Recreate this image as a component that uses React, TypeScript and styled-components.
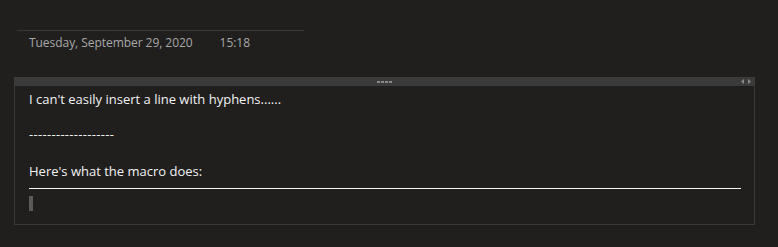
import React from 'react';
import styled, { createGlobalStyle } from 'styled-components';

const GlobalStyle = createGlobalStyle`
  html, body {
    margin: 0;
    padding: 0;
    background: #201f1e;
  }
  body {
    font-family: 'Open Sans', 'Noto Sans', sans-serif;
  }
`;

const Page = styled.div`
  width: 778px;
  height: 247px;
  background: #201f1e;
  padding-top: 30px;
  box-sizing: border-box;
`;

const TitleArea = styled.div`
  margin-left: 17px;
  width: 287px;
  border-top: 1px solid #363636;
`;

const DateRow = styled.div`
  display: flex;
  gap: 27px;
  padding: 4px 0 0 12px;
  font-size: 12px;
  letter-spacing: -0.05px;
  line-height: 16px;
  color: #a8a8a8;
`;

const Box = styled.div`
  margin: 26px 0 0 14px;
  width: 741px;
  height: 148px;
  box-sizing: border-box;
  border: 1px solid #3a3a3a;
  border-top: none;
  display: flex;
  flex-direction: column;
`;

const Handle = styled.div`
  height: 9px;
  background: #3b3b3b;
  display: flex;
  align-items: center;
`;

const Dots = styled.div`
  display: flex;
  gap: 1px;
  margin-left: 362px;
`;

const Dot = styled.span`
  width: 3px;
  height: 2px;
  background: #8a8a8a;
`;

const Arrows = styled.div`
  display: flex;
  gap: 4px;
  margin-left: auto;
  margin-right: 3px;
`;

const Content = styled.div`
  padding: 4px 0 0 14px;
  font-size: 13px;
  line-height: 18px;
  color: #f2f2f2;
`;

const Line = styled.div<{ $gap?: number; $spread?: number }>`
  margin-top: ${(p) => p.$gap ?? 0}px;
  letter-spacing: ${(p) => p.$spread ?? 0}px;
  white-space: pre;
`;

const Rule = styled.div`
  margin-top: 8px;
  width: 712px;
  height: 1px;
  background: #f4f4f4;
`;

const Caret = styled.div`
  margin-top: 7px;
  width: 4px;
  height: 15px;
  background: #5a5a5a;
`;

const Tri = ({ dir }: { dir: 'l' | 'r' }) => (
  <svg width="3" height="5" viewBox="0 0 3 5">
    <path d={dir === 'l' ? 'M3 0 L0 2.5 L3 5 Z' : 'M0 0 L3 2.5 L0 5 Z'} fill="#8a8a8a" />
  </svg>
);

export default function App() {
  return (
    <Page>
      <GlobalStyle />
      <TitleArea>
        <DateRow>
          <span>Tuesday, September 29, 2020</span>
          <span>15:18</span>
        </DateRow>
      </TitleArea>
      <Box>
        <Handle>
          <Dots>
            <Dot />
            <Dot />
            <Dot />
            <Dot />
          </Dots>
          <Arrows>
            <Tri dir="l" />
            <Tri dir="r" />
          </Arrows>
        </Handle>
        <Content>
          <Line>I can't easily insert a line with hyphens......</Line>
          <Line $gap={17} $spread={0.3}>-------------------</Line>
          <Line $gap={19}>Here's what the macro does:</Line>
          <Rule />
          <Caret />
        </Content>
      </Box>
    </Page>
  );
}
